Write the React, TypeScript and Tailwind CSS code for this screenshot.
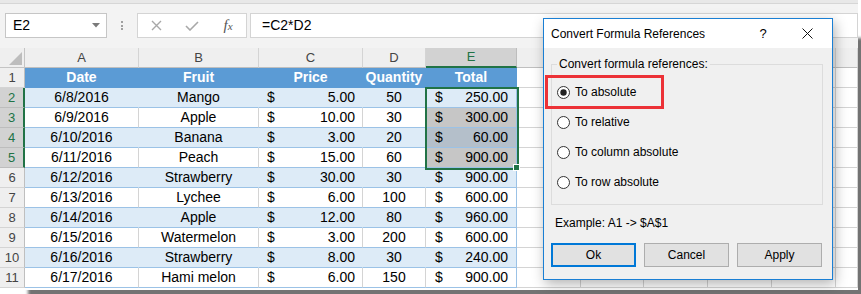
import React from "react";

const DATA: string[][] = [
  ["6/8/2016", "Mango", "5.00", "50", "250.00"],
  ["6/9/2016", "Apple", "10.00", "30", "300.00"],
  ["6/10/2016", "Banana", "3.00", "20", "60.00"],
  ["6/11/2016", "Peach", "15.00", "60", "900.00"],
  ["6/12/2016", "Strawberry", "30.00", "30", "900.00"],
  ["6/13/2016", "Lychee", "6.00", "100", "600.00"],
  ["6/14/2016", "Apple", "12.00", "80", "960.00"],
  ["6/15/2016", "Watermelon", "3.00", "200", "600.00"],
  ["6/16/2016", "Strawberry", "8.00", "30", "240.00"],
  ["6/17/2016", "Hami melon", "6.00", "150", "900.00"],
];

const EXTRA_W = ["w-[64px]", "w-[63px]", "w-[64px]", "w-[64px]", "w-[64px]", "w-[22px]"];

function ExtraCells() {
  return (
    <>
      {EXTRA_W.map((w, k) => (
        <div key={k} className={`${w} shrink-0 bg-white border-b border-r border-[#d4d4d4]`} />
      ))}
    </>
  );
}

function RowNum({ n, sel }: { n: number; sel: boolean }) {
  return sel ? (
    <div className="w-[25px] shrink-0 flex items-center justify-center bg-[#d2d2d2] text-[#217346] text-[13px] border-b border-b-[#bdbdbd] border-r-2 border-r-[#217346]">
      {n}
    </div>
  ) : (
    <div className="w-[25px] shrink-0 flex items-center justify-center bg-[#efefef] text-[#444444] text-[13px] border-b border-b-[#d4d4d4] border-r border-r-[#bfbfbf]">
      {n}
    </div>
  );
}

function ColHeaders() {
  const letters = [
    { l: "A", w: "w-[114px]" },
    { l: "B", w: "w-[120px]" },
    { l: "C", w: "w-[104px]" },
    { l: "D", w: "w-[63px]" },
  ];
  return (
    <div className="flex h-[20px]">
      <div className="w-[25px] shrink-0 bg-[#efefef] border-r border-b border-[#c4c4c4] flex items-end justify-end pr-[2px] pb-[2px]">
        <svg width="13" height="13" viewBox="0 0 13 13">
          <polygon points="13,0 13,13 0,13" fill="#bdbdbd" />
        </svg>
      </div>
      {letters.map((c) => (
        <div
          key={c.l}
          className={`${c.w} shrink-0 flex items-center justify-center bg-[#efefef] text-[#444444] text-[13px] border-r border-r-[#d4d4d4] border-b border-b-[#bfbfbf]`}
        >
          {c.l}
        </div>
      ))}
      <div className="w-[91px] shrink-0 flex items-center justify-center bg-[#d2d2d2] text-[#217346] text-[13px] border-r border-r-[#bdbdbd] border-b-2 border-b-[#217346]">
        E
      </div>
      {EXTRA_W.map((w, k) => (
        <div
          key={k}
          className={`${w} shrink-0 bg-[#efefef] border-r border-r-[#d4d4d4] border-b border-b-[#bfbfbf]`}
        />
      ))}
    </div>
  );
}

function HeaderRow() {
  const cell =
    "shrink-0 flex items-center justify-center bg-[#5b9bd5] text-white font-bold border-b border-r border-[#5b9bd5]";
  return (
    <div className="flex h-[20px]">
      <RowNum n={1} sel={false} />
      <div className={`w-[114px] ${cell}`}>Date</div>
      <div className={`w-[120px] ${cell}`}>Fruit</div>
      <div className={`w-[104px] ${cell}`}>Price</div>
      <div className={`w-[63px] ${cell}`}>Quantity</div>
      <div className={`w-[91px] ${cell}`}>Total</div>
      <ExtraCells />
    </div>
  );
}

function DataRow({ i, r }: { i: number; r: string[] }) {
  const blue = i % 2 === 0;
  const sel = i <= 3;
  const bg = blue ? "bg-[#ddebf7]" : "bg-white";
  const vline = blue ? "border-r-[#ddebf7]" : "border-r-[#d4d4d4]";
  const eBg = i === 1 || i === 3 ? "bg-[#c6c6c6]" : i === 2 ? "bg-[#b4bfca]" : bg;
  const base = "shrink-0 flex items-center border-b border-r border-b-[#9bc2e6]";
  return (
    <div className="flex h-[20px]">
      <RowNum n={i + 2} sel={sel} />
      <div className={`w-[114px] justify-center ${base} ${vline} ${bg}`}>{r[0]}</div>
      <div className={`w-[120px] justify-center ${base} ${vline} ${bg}`}>{r[1]}</div>
      <div className={`w-[104px] justify-between pl-[8px] pr-[7px] ${base} ${vline} ${bg}`}>
        <span>$</span>
        <span>{r[2]}</span>
      </div>
      <div className={`w-[63px] justify-center ${base} ${vline} ${bg}`}>{r[3]}</div>
      <div className={`w-[91px] justify-between pl-[9px] pr-[8px] ${base} border-r-[#9bc2e6] ${eBg}`}>
        <span>$</span>
        <span>{r[4]}</span>
      </div>
      <ExtraCells />
    </div>
  );
}

function FormulaBar() {
  return (
    <div className="h-[48px] bg-[#f3f3f3] flex flex-col">
      <div className="h-[4px] bg-[#e8e8e8] border-b border-[#d6d6d6]" />
      <div className="flex items-start pt-[9px] pl-[5px]">
        <div className="w-[102px] h-[25px] bg-white border border-[#c6c6c6] flex items-center pl-[7px] pr-[6px] text-[14px] text-black">
          <span>E2</span>
          <svg className="ml-auto" width="8" height="5" viewBox="0 0 8 5">
            <polygon points="0,0 8,0 4,4.5" fill="#7a7a7a" />
          </svg>
        </div>
        <div className="w-[30px] h-[25px] flex flex-col items-center justify-center gap-[1.5px]">
          <div className="w-[2px] h-[2px] bg-[#a0a0a0]" />
          <div className="w-[2px] h-[2px] bg-[#a0a0a0]" />
          <div className="w-[2px] h-[2px] bg-[#a0a0a0]" />
        </div>
        <div className="w-[110px] h-[25px] bg-white border border-[#d4d4d4] flex items-center">
          <div className="w-[36px] flex justify-center">
            <svg width="11" height="11" viewBox="0 0 11 11">
              <path d="M1 1 L10 10 M10 1 L1 10" stroke="#a8a8a8" strokeWidth="1.4" fill="none" />
            </svg>
          </div>
          <div className="w-[36px] flex justify-center">
            <svg width="14" height="10" viewBox="0 0 14 10">
              <path d="M1 5 L5 9 L13 1" stroke="#a8a8a8" strokeWidth="1.6" fill="none" />
            </svg>
          </div>
          <div className="w-[36px] flex justify-center">
            <span className="italic font-['Liberation_Serif',serif] text-[15px] text-[#555555] leading-none">
              f<span className="text-[11px]">x</span>
            </span>
          </div>
        </div>
        <div className="ml-[3px] w-[608px] h-[25px] bg-white border border-[#d4d4d4] flex items-center pl-[11px] text-[14px] text-black">
          =C2*D2
        </div>
      </div>
    </div>
  );
}

function Radio({ checked }: { checked: boolean }) {
  return (
    <svg width="13" height="13" viewBox="0 0 13 13" className="shrink-0">
      <circle cx="6.5" cy="6.5" r="6" fill="#ffffff" stroke="#333333" strokeWidth="1" />
      {checked && <circle cx="6.5" cy="6.5" r="3.2" fill="#222222" />}
    </svg>
  );
}

function Dialog() {
  const options = [
    { t: "To absolute", c: true },
    { t: "To relative", c: false },
    { t: "To column absolute", c: false },
    { t: "To row absolute", c: false },
  ];
  return (
    <div className="absolute left-[543px] top-[18px] w-[290px] h-[262px] border border-[#1a7fd4] bg-[#f0f0f0] shadow-[2px_4px_12px_rgba(0,0,0,0.3)] flex flex-col font-['Liberation_Sans',Arial,sans-serif] text-[12px] text-black">
      <div className="h-[29px] bg-white flex items-center pl-[7px] shrink-0">
        <span>Convert Formula References</span>
        <span className="ml-auto w-[14px] text-center text-[13px]">?</span>
        <svg className="ml-[32px] mr-[19px]" width="11" height="11" viewBox="0 0 11 11">
          <path d="M0.5 0.5 L10.5 10.5 M10.5 0.5 L0.5 10.5" stroke="#111111" strokeWidth="1" fill="none" />
        </svg>
      </div>
      <div className="flex flex-col px-[7px] pt-[16px]">
        <div className="w-[272px] border border-[#dcdcdc] pl-[5px] pb-[7px] flex flex-col">
          <span className="-mt-[9px] self-start px-[2px] bg-[#f0f0f0] leading-[16px] h-[16px]">
            Convert formula references:
          </span>
          <div className="pt-[5px] flex flex-col">
            {options.map((o) => (
              <div key={o.t} className="h-[30px] flex items-center">
                <Radio checked={o.c} />
                <span className="ml-[5px]">{o.t}</span>
              </div>
            ))}
          </div>
        </div>
        <div className="mt-[10px] h-[16px] leading-[16px] pl-[4px]">Example: A1 -&gt; $A$1</div>
        <div className="mt-[12px] flex gap-[8px]">
          <button className="w-[85px] h-[24px] bg-[#e1e1e1] border-2 border-[#0078d7] flex items-center justify-center">
            Ok
          </button>
          <button className="w-[85px] h-[24px] bg-[#e1e1e1] border border-[#adadad] flex items-center justify-center">
            Cancel
          </button>
          <button className="w-[85px] h-[24px] bg-[#e1e1e1] border border-[#adadad] flex items-center justify-center">
            Apply
          </button>
        </div>
      </div>
      <div className="absolute left-[1px] top-[56px] w-[119px] h-[34px] border-[3px] border-[#ec3237]" />
    </div>
  );
}

export default function App() {
  return (
    <div className="w-[861px] h-[294px] bg-white overflow-hidden">
      <div className="relative w-[858px] h-[290px] bg-white shadow-[28px_38px_3px_rgba(0,0,0,0.55)] font-['Liberation_Sans',Arial,sans-serif] text-[14px] text-black">
        <FormulaBar />
        <div className="relative">
          <ColHeaders />
          <HeaderRow />
          {DATA.map((r, i) => (
            <DataRow key={i} i={i} r={r} />
          ))}
          <div className="absolute left-[425px] top-[39px] w-[94px] h-[83px] border-2 border-[#217346]" />
          <div className="absolute left-[513px] top-[116px] w-[7px] h-[7px] bg-[#217346] border border-white" />
        </div>
        <Dialog />
      </div>
    </div>
  );
}
